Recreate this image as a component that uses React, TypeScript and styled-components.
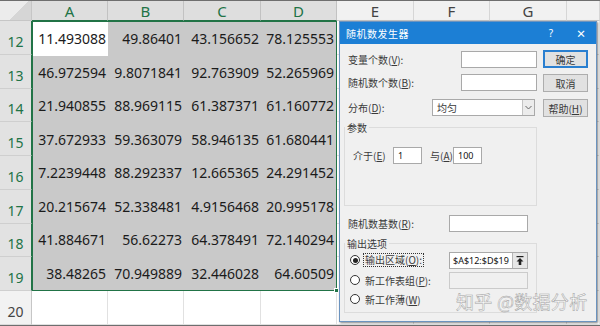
import React from 'react'
import styled, { createGlobalStyle } from 'styled-components'

const GREEN = '#217346'

const GlobalStyle = createGlobalStyle`
  html, body {
    margin: 0;
    padding: 0;
    background: #fff;
  }
  body {
    font-family: 'Noto Sans', 'Open Sans', sans-serif;
  }
`

const rows = [
  ['11.493088', '49.86401', '43.156652', '78.125553'],
  ['46.972594', '9.8071841', '92.763909', '52.265969'],
  ['21.940855', '88.969115', '61.387371', '61.160772'],
  ['37.672933', '59.363079', '58.946135', '61.680441'],
  ['7.2239448', '88.292337', '12.665365', '24.291452'],
  ['20.215674', '52.338481', '4.9156468', '20.995178'],
  ['41.884671', '56.62273', '64.378491', '72.140294'],
  ['38.48265', '70.949889', '32.446028', '64.60509'],
]

const headers = ['A', 'B', 'C', 'D', 'E', 'F', 'G', '']

export default function App() {
  return (
    <>
      <GlobalStyle />
      <Screen>
        <HeaderRow>
          <Corner />
          {headers.map((h, i) => (
            <ColHeader key={i} $selected={i < 4}>
              {h}
            </ColHeader>
          ))}
        </HeaderRow>
        <Body>
          <RowHeads>
            {rows.map((_, i) => (
              <RowHead key={i} $selected>
                {12 + i}
              </RowHead>
            ))}
          </RowHeads>
          <Block>
            {rows.map((r, ri) =>
              r.map((v, ci) => (
                <Cell key={ri + '-' + ci} $active={ri === 0 && ci === 0}>
                  {v}
                </Cell>
              ))
            )}
            <FillHandle />
          </Block>
          <Rest>
            {Array.from({ length: 32 }).map((_, i) => (
              <BlankCell key={i} />
            ))}
          </Rest>
        </Body>
        <LastRow>
          <RowHead>20</RowHead>
          {headers.map((_, i) => (
            <BlankCell key={i} />
          ))}
        </LastRow>

        <Dialog>
          <TitleBar>
            <Title>随机数发生器</Title>
            <TitleBtn>?</TitleBtn>
            <TitleBtn $close>×</TitleBtn>
          </TitleBar>
          <DialogBody>
            <Form>
              <FieldRow $mt={1}>
                <Label>变量个数(<u>V</u>):</Label>
                <TextBox $w={76} />
              </FieldRow>
              <FieldRow $mt={6}>
                <Label>随机数个数(<u>B</u>):</Label>
                <TextBox $w={76} />
              </FieldRow>
              <FieldRow $mt={8}>
                <Label>分布(<u>D</u>):</Label>
                <Select>
                  <SelectText>均匀</SelectText>
                  <SelectArrow>
                    <svg width="7" height="5" viewBox="0 0 7 5">
                      <path d="M0.5 1 L3.5 4 L6.5 1" fill="none" stroke="#666" strokeWidth="1" />
                    </svg>
                  </SelectArrow>
                </Select>
              </FieldRow>

              <Group $mt={5}>
                <Legend>参数</Legend>
                <ParamRow>
                  <ParamLabel $w={40}>介于(<u>E</u>)</ParamLabel>
                  <TextBox $w={29}>1</TextBox>
                  <ParamLabel $w={23} $ml={8}>与(<u>A</u>)</ParamLabel>
                  <TextBox $w={29}>100</TextBox>
                </ParamRow>
              </Group>

              <FieldRow $mt={9}>
                <Label>随机数基数(<u>R</u>):</Label>
                <TextBox $w={79} $mr={9} />
              </FieldRow>

              <Group $mt={5} $pb={5}>
                <Legend>输出选项</Legend>
                <RadioRow $mt={2}>
                  <RadioLabel>
                    <Radio $checked />
                    <FocusText>输出区域(<u>O</u>):</FocusText>
                  </RadioLabel>
                  <RefBox>
                    <RefText>$A$12:$D$19</RefText>
                    <RefBtn>
                      <svg width="8" height="9" viewBox="0 0 8 9">
                        <rect x="0.5" y="0" width="7" height="1.2" fill="#222" />
                        <path d="M4 2 L7.5 5.5 L5.3 5.5 L5.3 9 L2.7 9 L2.7 5.5 L0.5 5.5 Z" fill="#222" />
                      </svg>
                    </RefBtn>
                  </RefBox>
                </RadioRow>
                <RadioRow $mt={4}>
                  <RadioLabel>
                    <Radio />
                    <PlainText>新工作表组(<u>P</u>):</PlainText>
                  </RadioLabel>
                  <TextBox $w={79} $mr={8} $disabled />
                </RadioRow>
                <RadioRow $mt={3}>
                  <RadioLabel>
                    <Radio />
                    <PlainText>新工作薄(<u>W</u>)</PlainText>
                  </RadioLabel>
                </RadioRow>
              </Group>
            </Form>

            <Buttons>
              <DlgButton $default>确定</DlgButton>
              <DlgButton $mt={6}>取消</DlgButton>
              <DlgButton $mt={7}>
                帮助(<u>H</u>)
              </DlgButton>
            </Buttons>
          </DialogBody>
        </Dialog>

        <Watermark>知乎 @数据分析</Watermark>
      </Screen>
    </>
  )
}

const Screen = styled.div`
  position: relative;
  width: 600px;
  height: 326px;
  box-sizing: border-box;
  overflow: hidden;
  border-top: 1px solid #6e6e6e;
  border-bottom: 1px solid #6e6e6e;
  background: #fff;
`

const colTemplate = '32px 76px 76px 77px 76px 77px 76px 77px 1fr'

const HeaderRow = styled.div`
  display: grid;
  grid-template-columns: ${colTemplate};
  height: 20px;
`

const Corner = styled.div`
  box-sizing: border-box;
  border-right: 1px solid #c6c6c6;
  border-bottom: 1px solid #c6c6c6;
  background: linear-gradient(135deg, #ececec 58%, #d6d6d6 58%);
`

const ColHeader = styled.div<{ $selected?: boolean }>`
  box-sizing: border-box;
  display: flex;
  align-items: center;
  justify-content: center;
  background: ${(p) => (p.$selected ? '#dedede' : '#f1f1f1')};
  color: ${(p) => (p.$selected ? GREEN : '#444')};
  border-right: 1px solid ${(p) => (p.$selected ? '#c2c2c2' : '#d6d6d6')};
  border-bottom: 1px solid ${(p) => (p.$selected ? GREEN : '#c6c6c6')};
  font-size: 15px;
  line-height: 1;
  padding-top: 1px;
`

const Body = styled.div`
  display: flex;
  height: 270px;
`

const RowHeads = styled.div`
  width: 32px;
  display: flex;
  flex-direction: column;
`

const RowHead = styled.div<{ $selected?: boolean }>`
  box-sizing: border-box;
  height: 33.75px;
  display: flex;
  align-items: flex-end;
  justify-content: center;
  padding-bottom: 5px;
  background: ${(p) => (p.$selected ? '#e2e2e2' : '#f2f2f2')};
  color: ${(p) => (p.$selected ? GREEN : '#444')};
  border-bottom: 1px solid ${(p) => (p.$selected ? '#cfcfcf' : '#dadada')};
  border-right: 1px solid ${(p) => (p.$selected ? GREEN : '#c6c6c6')};
  font-size: 14px;
  line-height: 1;
`

const Block = styled.div`
  position: relative;
  width: 305px;
  box-sizing: border-box;
  border: 1px solid ${GREEN};
  background: #c9c9c9;
  display: grid;
  grid-template-columns: 75px 76px 77px 75px;
  grid-auto-rows: 33.5px;
`

const Cell = styled.div<{ $active?: boolean }>`
  display: flex;
  align-items: center;
  justify-content: flex-end;
  padding-right: 2px;
  font-size: 14px;
  color: #1b1b1b;
  background: ${(p) => (p.$active ? '#fff' : 'transparent')};
`

const FillHandle = styled.div`
  position: absolute;
  right: -3px;
  bottom: -3px;
  width: 5px;
  height: 5px;
  background: ${GREEN};
  border: 1px solid #fff;
  box-sizing: border-box;
`

const Rest = styled.div`
  flex: 1;
  display: grid;
  grid-template-columns: 77px 76px 77px 1fr;
  grid-auto-rows: 33.75px;
`

const BlankCell = styled.div`
  box-sizing: border-box;
  border-right: 1px solid #e1e1e1;
  border-bottom: 1px solid #e1e1e1;
  background: #fff;
`

const LastRow = styled.div`
  display: grid;
  grid-template-columns: ${colTemplate};
  height: 34px;
`

const Dialog = styled.div`
  position: absolute;
  left: 339px;
  top: 20px;
  width: 258px;
  height: 301px;
  box-sizing: border-box;
  border: 1px solid #6b93bf;
  background: #f0f0f0;
  box-shadow: 1px 1px 2px rgba(0, 0, 0, 0.5);
  font-family: 'Noto Sans CJK SC', 'Noto Sans', sans-serif;
  font-size: 10px;
  color: #3a3a3a;
`

const TitleBar = styled.div`
  height: 22px;
  display: flex;
  align-items: center;
  background: #1c7fd5;
  color: #fff;
`

const Title = styled.div`
  flex: 1;
  padding-left: 6px;
  font-size: 10px;
  letter-spacing: 0.5px;
`

const TitleBtn = styled.div<{ $close?: boolean }>`
  width: 30px;
  text-align: center;
  font-family: 'Noto Sans', sans-serif;
  font-size: ${(p) => (p.$close ? '15px' : '10px')};
  line-height: 22px;
`

const DialogBody = styled.div`
  display: grid;
  grid-template-columns: 192px 45px;
  column-gap: 6px;
  padding: 6px 0 0 5px;
`

const Form = styled.div`
  display: flex;
  flex-direction: column;
`

const FieldRow = styled.div<{ $mt?: number }>`
  display: flex;
  align-items: center;
  justify-content: space-between;
  height: 17px;
  margin-top: ${(p) => p.$mt || 0}px;
  padding-left: 3px;
`

const Label = styled.span`
  white-space: nowrap;
  u {
    text-decoration: underline;
  }
`

const TextBox = styled.div<{ $w: number; $mr?: number; $disabled?: boolean }>`
  box-sizing: border-box;
  width: ${(p) => p.$w}px;
  height: 17px;
  margin-right: ${(p) => p.$mr || 0}px;
  border: 1px solid ${(p) => (p.$disabled ? '#cbcbcb' : '#a9a9a9')};
  background: ${(p) => (p.$disabled ? '#f0f0f0' : '#fff')};
  display: flex;
  align-items: center;
  padding-left: 4px;
  font-family: 'Noto Sans', sans-serif;
  font-size: 9px;
  color: #111;
`

const Select = styled.div`
  box-sizing: border-box;
  width: 103px;
  height: 17px;
  margin-right: 2px;
  border: 1px solid #a9a9a9;
  background: #fff;
  display: flex;
`

const SelectText = styled.div`
  flex: 1;
  display: flex;
  align-items: center;
  padding-left: 4px;
`

const SelectArrow = styled.div`
  width: 11px;
  border-left: 1px solid #c4c4c4;
  background: #ececec;
  display: flex;
  align-items: center;
  justify-content: center;
`

const Group = styled.fieldset<{ $mt?: number; $pb?: number }>`
  margin: ${(p) => p.$mt || 0}px 0 0 -1px;
  padding: 0 0 ${(p) => (p.$pb !== undefined ? p.$pb : 41)}px 0;
  border: 1px solid #dcdcdc;
  min-width: 0;
`

const Legend = styled.legend`
  padding: 0 2px;
  margin-left: 0;
  font-size: 10px;
  line-height: 13px;
`

const ParamRow = styled.div`
  display: flex;
  align-items: center;
  height: 17px;
  margin-top: 13px;
  padding-left: 8px;
`

const ParamLabel = styled.span<{ $w: number; $ml?: number }>`
  width: ${(p) => p.$w}px;
  margin-left: ${(p) => p.$ml || 0}px;
  white-space: nowrap;
`

const RadioRow = styled.div<{ $mt?: number }>`
  display: flex;
  align-items: center;
  justify-content: space-between;
  height: 16px;
  margin-top: ${(p) => p.$mt || 0}px;
  padding-left: 5px;
`

const RadioLabel = styled.div`
  display: flex;
  align-items: center;
`

const Radio = styled.span<{ $checked?: boolean }>`
  box-sizing: border-box;
  width: 10px;
  height: 10px;
  border-radius: 50%;
  border: 1px solid #333;
  background: #fff;
  display: flex;
  align-items: center;
  justify-content: center;
  margin-right: 3px;

  &::after {
    content: '';
    width: 5px;
    height: 5px;
    border-radius: 50%;
    background: ${(p) => (p.$checked ? '#222' : 'transparent')};
  }
`

const FocusText = styled.span`
  border: 1px dotted #333;
  padding: 0 1px;
  line-height: 12px;
  white-space: nowrap;
`

const PlainText = styled.span`
  padding: 0 2px;
  white-space: nowrap;
`

const RefBox = styled.div`
  box-sizing: border-box;
  width: 79px;
  height: 17px;
  margin-right: 8px;
  border: 1px solid #a9a9a9;
  background: #fff;
  display: flex;
`

const RefText = styled.div`
  flex: 1;
  display: flex;
  align-items: center;
  padding-left: 3px;
  font-family: 'Noto Sans', sans-serif;
  font-size: 9px;
  color: #111;
`

const RefBtn = styled.div`
  width: 14px;
  border-left: 1px solid #b5b5b5;
  background: #e6e6e6;
  display: flex;
  align-items: center;
  justify-content: center;
`

const Buttons = styled.div`
  display: flex;
  flex-direction: column;
`

const DlgButton = styled.div<{ $default?: boolean; $mt?: number }>`
  box-sizing: border-box;
  height: 18px;
  margin-top: ${(p) => p.$mt || 0}px;
  background: #e1e1e1;
  border: ${(p) => (p.$default ? '2px solid #2a7fd0' : '1px solid #adadad')};
  display: flex;
  align-items: center;
  justify-content: center;
  white-space: nowrap;
`

const Watermark = styled.div`
  position: absolute;
  left: 456px;
  top: 287px;
  font-family: 'Noto Sans CJK SC', sans-serif;
  font-size: 18px;
  letter-spacing: 0.3px;
  color: rgba(255, 255, 255, 0.95);
  -webkit-text-stroke: 0.5px #a2a2a2;
  white-space: nowrap;
`
